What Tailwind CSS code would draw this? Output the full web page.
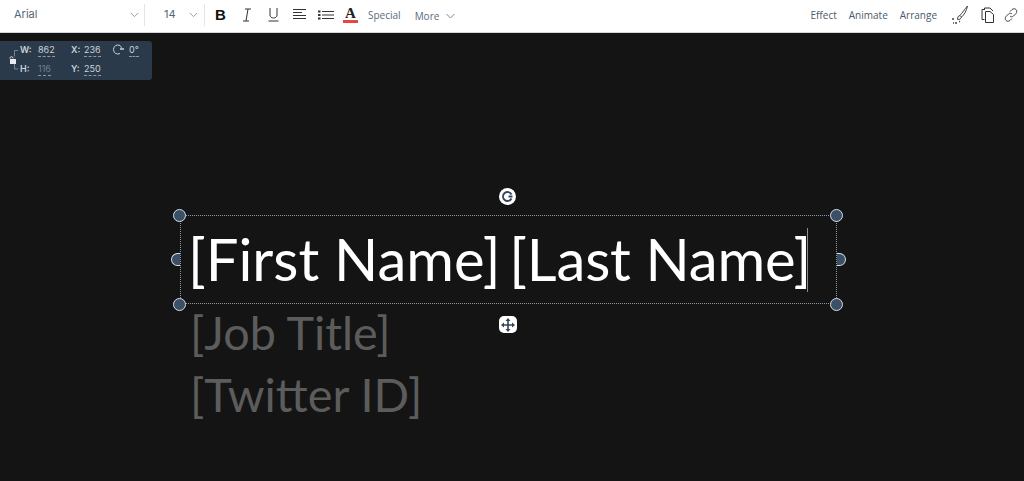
<!DOCTYPE html>
<html lang="en">
<head>
  <meta charset="UTF-8">
  <title>Editor</title>
  <script src="https://cdn.jsdelivr.net/npm/@tailwindcss/browser@4"></script>
</head>
<body class="w-[1024px] h-[481px] overflow-hidden bg-[#141414] font-['Open_Sans',sans-serif]">
  <!-- toolbar -->
  <div class="h-[33px] pb-[3px] bg-white border-b border-[#d5d8db] flex items-center text-[10px] text-[#4a5a6a]">
    <div class="w-[145px] h-[22px] pl-[14px] pr-[5px] flex items-center justify-between border-r border-[#dfe7ee]">
      <span class="text-[11px] font-['Inter',sans-serif] text-[#556575]">Arial</span>
      <svg class="w-[9px] h-[6px]" viewBox="0 0 11 7" fill="none" stroke="#7d8994"><path d="M1 1l4.500 4.500L10 1"/></svg>
    </div>
    <div class="w-[60px] h-[22px] pl-[19px] pr-[6px] flex items-center justify-between border-r border-[#dfe7ee]">
      <span class="text-[11px] font-['Inter',sans-serif] text-[#556575]">14</span>
      <svg class="w-[9px] h-[6px]" viewBox="0 0 11 7" fill="none" stroke="#7d8994"><path d="M1 1l4.500 4.500L10 1"/></svg>
    </div>
    <div class="flex items-center ml-[10px] h-[22px]">
      <span class="w-[12px] text-[15px] leading-none font-bold font-['Liberation_Sans',sans-serif] text-[#111]">B</span>
      <svg class="ml-[15px] w-[10px] h-[14px]" viewBox="0 0 10 14" fill="none" stroke="#333"><path d="M3 1h6M1 13h6M6 1L4 13"/></svg>
      <svg class="ml-[16px] w-[11px] h-[15px]" viewBox="0 0 11 15" fill="none" stroke="#333"><path d="M2 1v7c0 4 7 4 7 0V1M0.500 14h10"/></svg>
      <svg class="ml-[14px] w-[13px] h-[11px]" viewBox="0 0 13 11" fill="none" stroke="#333"><path d="M0 .5h13M0 3.500h9M0 6.500h13M0 9.500h13"/></svg>
      <svg class="ml-[12px] w-[16px] h-[10px]" viewBox="0 0 16 10" stroke="#333" fill="none"><path d="M4 1.500h12M4 5h12M4 8.500h12"/><path d="M0 1.500h2.500M0 5h2.500M0 8.500h2.500" stroke-width="2"/></svg>
      <div class="ml-[9px] w-[15px] flex flex-col items-center">
        <span class="text-[15px] leading-[14px] font-bold font-['Liberation_Serif',serif] text-[#222]">A</span>
        <span class="w-[15px] h-[3px] bg-[#e5483f]"></span>
      </div>
      <span class="ml-[10px] mt-[2px] text-[#5b6b7a]">Special</span>
      <span class="ml-[14px] mt-[4px] text-[#5b6b7a]">More</span>
      <svg class="ml-[7px] mt-[3px] w-[9px] h-[6px]" viewBox="0 0 9 6" fill="none" stroke="#7d8994"><path d="M.5 1L4.500 5l4-4"/></svg>
    </div>
    <div class="ml-auto flex items-center h-[22px]">
      <span class="mt-[2px]">Effect</span>
      <span class="ml-[12px] mt-[2px]">Animate</span>
      <span class="ml-[12px] mt-[2px]">Arrange</span>
      <svg class="ml-[14px] w-[18px] h-[20px]" viewBox="0 0 18 20" fill="none" stroke="#444"><path d="M16.500 1C14 4 11 8 9 10.500l1.500 1.500C13 10 15.500 6 16.500 1zM9 10.500c-2 .5-2.500 2-2.500 4 2 0 3.500-.5 4-2.500"/><path d="M1 14h2M5 17v2M2 18h1M8 16.500h1" stroke-width="1.500"/></svg>
      <svg class="ml-[12px] w-[14px] h-[16px]" viewBox="0 0 14 16" fill="none" stroke="#333"><path d="M3.500 12.500H1V2.500h2.500M3.500 3V1h5.500l3 3"/><path d="M4.500 4.500H9l3.500 3v8h-8z"/></svg>
      <svg class="ml-[9px] mr-[6px] w-[14px] h-[14px]" viewBox="0 0 14 14" fill="none" stroke="#444"><path d="M6 3.500L8 1.500c1.500-1.200 3.200-.8 4 0s1.200 2.500 0 4L9.500 8c-1.200 1-2.500 1-3.500 0M8 6c-1-1-2.500-1-3.500 0L2 8.500c-1.200 1.500-.8 3.200 0 4s2.500 1.200 4 0l2-2"/></svg>
    </div>
  </div>

  <!-- canvas -->
  <div class="relative h-[448px] font-['Lato',sans-serif]">
    <!-- size panel -->
    <div class="absolute left-0 top-[8px] w-[152px] h-[39px] bg-[#2b3a4a] rounded-r-[3px] font-['Inter',sans-serif] text-[9px] leading-[12px] text-[#c9d2da]">
      <span class="absolute left-[20px] top-[3px] font-semibold">W:</span>
      <span class="absolute left-[38px] top-[3px] border-b border-dashed border-[#8c99a5]">862</span>
      <span class="absolute left-[71px] top-[3px] font-semibold">X:</span>
      <span class="absolute left-[84px] top-[3px] border-b border-dashed border-[#8c99a5]">236</span>
      <svg class="absolute left-[112px] top-[3px] w-[13px] h-[11px]" viewBox="0 0 13 11" fill="none" stroke="#c9d2da"><path d="M8 9.500a4.500 4.500 0 1 1 0-8c.8.500 1.200 1.500 1.500 3"/><path d="M8 5h4" stroke-width="1.500"/></svg>
      <span class="absolute left-[129px] top-[3px] border-b border-dashed border-[#8c99a5]">0°</span>
      <span class="absolute left-[20px] top-[22px] font-semibold">H:</span>
      <span class="absolute left-[38px] top-[22px] border-b border-dashed border-[#8c99a5] text-[#6f7e8c]">116</span>
      <span class="absolute left-[71px] top-[22px] font-semibold">Y:</span>
      <span class="absolute left-[84px] top-[22px] border-b border-dashed border-[#8c99a5]">250</span>
      <svg class="absolute left-[8px] top-[9px] w-[11px] h-[20px]" viewBox="0 0 11 20" fill="none" stroke="#77848f"><path d="M10 .5H6.500v6M6.500 14v5H10"/><path d="M2 8.500c0-2.500 3-2.500 3 0" stroke="#e8ecef"/><rect x="2" y="9" width="6" height="5" fill="#e8ecef" stroke="none"/></svg>
    </div>

    <!-- text block -->
    <div class="absolute left-[188px] top-[191px] text-[58px] leading-[70px] whitespace-nowrap text-white">[First Name]<span class="ml-[-6px] tracking-[-0.15px]"> [Last Name]</span></div>
    <div class="absolute left-[190px] top-[268px] text-[46.800px] leading-[62px] whitespace-nowrap text-[#5c5c5c]">
      <div>[Job Title]</div>
      <div>[Twitter ID]</div>
    </div>

    <!-- selection box -->
    <div class="absolute left-[180px] top-[182px] w-[657px] h-[89px] border border-dotted border-[#8b97a3]"></div>
    <span class="absolute left-[807px] top-[195px] w-px h-[64px] bg-[#8c8c8c]"></span>
    <span class="absolute left-[173px] top-[176px] w-[13px] h-[13px] rounded-full bg-[#3b4f66] border-[1.500px] border-[#d7e0e8]"></span>
    <span class="absolute left-[830px] top-[176px] w-[13px] h-[13px] rounded-full bg-[#3b4f66] border-[1.500px] border-[#d7e0e8]"></span>
    <span class="absolute left-[173px] top-[265px] w-[13px] h-[13px] rounded-full bg-[#3b4f66] border-[1.500px] border-[#d7e0e8]"></span>
    <span class="absolute left-[830px] top-[265px] w-[13px] h-[13px] rounded-full bg-[#3b4f66] border-[1.500px] border-[#d7e0e8]"></span>
    <span class="absolute left-[171px] top-[220px] w-[9px] h-[13px] rounded-l-full bg-[#3b4f66] border-[1.500px] border-r-0 border-[#d7e0e8]"></span>
    <span class="absolute left-[837px] top-[220px] w-[9px] h-[13px] rounded-r-full bg-[#3b4f66] border-[1.500px] border-l-0 border-[#d7e0e8]"></span>

    <!-- rotate handle -->
    <div class="absolute left-[499px] top-[155px] w-[17px] h-[17px] rounded-full bg-white flex items-center justify-center">
      <svg class="w-[13px] h-[13px]" viewBox="0 0 13 13" fill="none" stroke="#33455a" stroke-width="1.800"><path d="M10.500 8.500a4.500 4.500 0 1 1 0-4"/><path d="M7.500 6.500h4" stroke-width="2"/></svg>
    </div>
    <!-- move handle -->
    <div class="absolute left-[499px] top-[283px] w-[18px] h-[17px] rounded-[5px] bg-white flex items-center justify-center">
      <svg class="w-[14px] h-[14px]" viewBox="0 0 14 14" fill="#33455a" stroke="none"><path d="M7 0l2.500 3h-5zM7 14l-2.500-3h5zM0 7l3-2.500v5zM14 7l-3 2.500v-5z"/><path d="M6.200 2h1.600v10H6.200zM2 6.200h10v1.600H2z"/></svg>
    </div>
  </div>
</body>
</html>
